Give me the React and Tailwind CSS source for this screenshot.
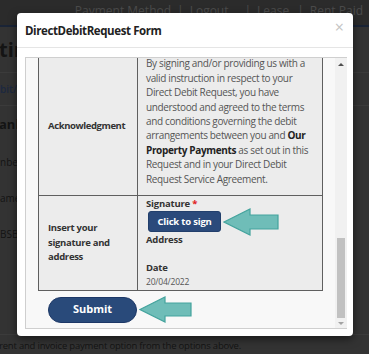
import React from "react";

function Arrow({ w = 56, h = 28 }) {
  const head = Math.round(w * 0.49);
  const s1 = Math.round(h * 0.25);
  const s2 = h - s1;
  return (
    <svg width={w} height={h} viewBox={`0 0 ${w} ${h}`} className="block shrink-0">
      <polygon
        points={`1,${h / 2} ${head},1 ${head},${s1} ${w - 1},${s1} ${w - 1},${s2} ${head},${s2} ${head},${h - 1}`}
        fill="#6fbdb8"
        stroke="#44a39d"
        strokeWidth="1.2"
        strokeLinejoin="miter"
      />
    </svg>
  );
}

function Scrollbar() {
  return (
    <div className="w-[12px] bg-[#f1f1f1] flex flex-col">
      <div className="h-[12px] flex items-center justify-center">
        <div className="w-0 h-0 border-x-[3px] border-x-transparent border-b-[3px] border-b-[#505050]" />
      </div>
      <div className="flex-1" />
      <div className="h-[80px] mx-[2px] bg-[#c1c1c1]" />
      <div className="h-[10px] flex items-center justify-center">
        <div className="w-0 h-0 border-x-[3px] border-x-transparent border-t-[3px] border-t-[#a3a3a3]" />
      </div>
    </div>
  );
}

function Page() {
  return (
    <div className="text-[#141414]">
      <div className="h-[27px] bg-[#2b2b2b] border-b-2 border-[#1a2436] flex justify-end items-start pt-[2px] pr-[6px] gap-[6px] text-[12px] text-[#4b4b4b]">
        <span>Payment Method</span>
        <span>|</span>
        <span>Logout</span>
        <span className="ml-[10px]">|</span>
        <span>Lease</span>
        <span className="ml-[2px]">|</span>
        <span>Rent Paid</span>
      </div>
      <div className="h-[46px] flex items-center text-[20px] font-bold border-b border-[#3b3b3b] -ml-[1px]">
        tings
      </div>
      <div className="h-[33px] flex items-center text-[10px] font-semibold text-[#1c2840] border-b border-[#3b3b3b]">
        bit/Credit
      </div>
      <div className="h-[38px] flex items-center text-[13px] font-bold -ml-[1px]">
        ank Details
      </div>
      <div className="h-[36px] flex items-center text-[10px]">nber</div>
      <div className="h-[37px] flex items-center text-[10px]">ame</div>
      <div className="h-[35px] flex items-center text-[10px]">BSB</div>
      <div className="h-[83px] border-b border-[#3b3b3b]" />
      <div className="h-[22px] flex items-center text-[9.5px] tracking-[-0.2px] -ml-[1px]">
        rent and invoice payment option from the options above.
      </div>
    </div>
  );
}

export default function App() {
  return (
    <div className="relative w-[369px] h-[354px] overflow-hidden bg-[#333333] font-['Open_Sans',sans-serif]">
      <Page />

      <div className="absolute left-[17px] top-[13px] w-[336px] h-[323px] bg-white rounded-[4px] shadow-[0_3px_9px_rgba(0,0,0,0.5)] flex flex-col">
        <div className="h-[35px] shrink-0 border-b border-[#e5e5e5] flex items-center justify-between pl-[8px] pr-[9px]">
          <span className="text-[11.5px] font-bold text-[#222] tracking-[-0.4px] mt-[2px]">DirectDebitRequest Form</span>
          <span className="text-[16px] leading-none text-[#c4c4c4] -mt-[6px]">×</span>
        </div>

        <div className="pl-[8px] pr-[6px] pt-[9px]">
          <div className="h-[272px] border border-r-0 border-[#cfcfcf] flex">
            <div className="flex-1 overflow-hidden bg-[#f8f8f8] flex flex-col justify-end pl-[12px]">
              <div className="w-[285px] border-x border-b border-[#5f5f5f] bg-[#ececec] text-[10px] leading-[14.4px]">
                <div className="h-[138px] flex">
                  <div className="w-[99px] border-r border-[#5f5f5f] flex items-center pl-[9px] font-bold text-[9.5px] text-[#333] tracking-[-0.4px]">
                    Acknowledgment
                  </div>
                  <div className="flex-1 flex flex-col justify-end pl-[8px] pb-[9px] text-[#555] tracking-[-0.35px]">
                    <p>
                      By signing and/or providing us with a<br />
                      valid instruction in respect to your<br />
                      Direct Debit Request, you have<br />
                      understood and agreed to the terms<br />
                      and conditions governing the debit<br />
                      arrangements between you and <b className="text-[#222]">Our</b>
                      <br />
                      <b className="text-[#222]">Property Payments</b> as set out in this<br />
                      Request and in your Direct Debit<br />
                      Request Service Agreement.
                    </p>
                  </div>
                </div>

                <div className="h-[95px] flex border-t border-[#5f5f5f]">
                  <div className="w-[99px] border-r border-[#5f5f5f] flex items-center pl-[9px] font-bold text-[9.5px] text-[#333] tracking-[-0.3px]">
                    <p>
                      Insert your
                      <br />
                      signature and
                      <br />
                      address
                    </p>
                  </div>
                  <div className="flex-1 pl-[8px] pt-[1px] font-bold text-[9.5px] text-[#333] leading-[14px] tracking-[-0.2px]">
                    <div className="h-[14px]">
                      Signature <span className="text-[#e02020]">*</span>
                    </div>
                    <div className="h-[21px] flex items-center gap-[2px] ml-[2px]">
                      <button className="w-[73px] h-[21px] rounded-[3px] bg-[#2b4a7b] border border-[#223f6c] text-white text-[9.5px] font-bold tracking-[-0.2px]">
                        Click to sign
                      </button>
                      <div className="-my-[4px]">
                        <Arrow w={56} h={28} />
                      </div>
                    </div>
                    <div className="h-[14px] mt-[1px]">Address</div>
                    <div className="h-[14px] mt-[14px]">Date</div>
                    <div className="h-[12px] mt-[1px] text-[8.5px] leading-[12px] font-normal text-[#555] tracking-[-0.2px]">
                      20/04/2022
                    </div>
                  </div>
                </div>
              </div>

              <div className="mt-[5px] mb-[5px] ml-[10px] flex items-center gap-[2px]">
                <button className="w-[89px] h-[26px] rounded-full bg-[#294a7a] border border-[#1c3766] text-white text-[11px] font-bold">
                  Submit
                </button>
                <Arrow w={53} h={27} />
              </div>
            </div>
            <Scrollbar />
          </div>
        </div>
      </div>
    </div>
  );
}
